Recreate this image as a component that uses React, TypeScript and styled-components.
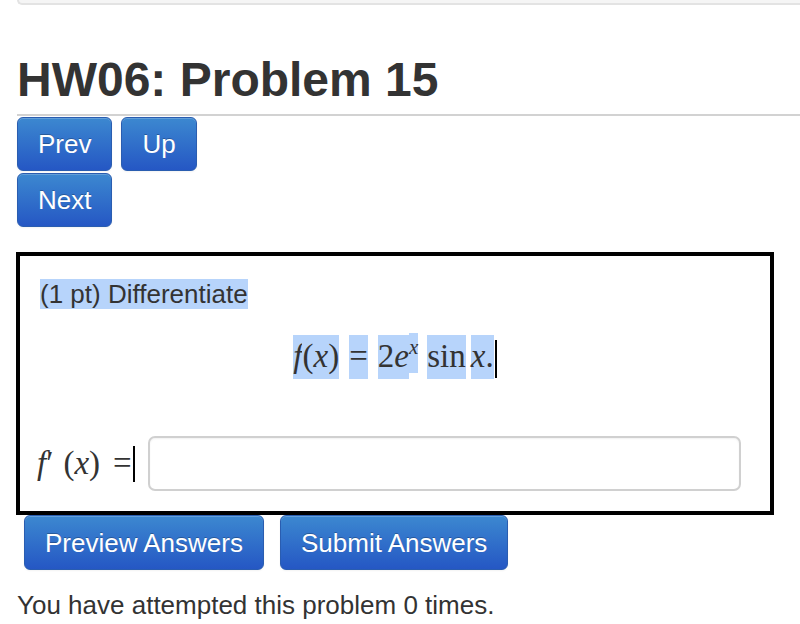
import React from 'react'
import styled, { createGlobalStyle } from 'styled-components'

const GlobalStyle = createGlobalStyle`
  body {
    margin: 0;
    background: #fff;
    color: #333;
    font-family: "Liberation Sans", Arial, sans-serif;
  }
`

const Page = styled.div`
  padding-left: 17px;
  overflow: hidden;
`
const TopWell = styled.div`
  height: 3px;
  background: #f5f5f5;
  border-bottom: 2px solid #e3e3e3;
  border-left: 2px solid #e3e3e3;
  border-bottom-left-radius: 6px;
`
const Title = styled.h1`
  margin: 49px 0 0;
  font-size: 48px;
  line-height: 52px;
  font-weight: bold;
  color: #333;
`
const Rule = styled.hr`
  margin: 8px 0 1px;
  border: 0;
  border-top: 2px solid #d2d2d2;
`
const NavRow = styled.div`
  display: flex;
  gap: 9px;
  margin-bottom: 2px;
`
const Button = styled.button`
  font-family: "Liberation Sans", Arial, sans-serif;
  font-size: 26px;
  line-height: 30px;
  height: 54px;
  padding: 0 20px;
  color: #fff;
  text-shadow: 0 -1px 0 rgba(0, 0, 0, 0.25);
  background: linear-gradient(180deg, #3c88d0 0%, #2557c4 100%);
  border: 1px solid #2a5db0;
  border-radius: 6px;
  box-shadow: inset 0 1px 0 rgba(255, 255, 255, 0.2), 0 1px 2px rgba(0, 0, 0, 0.05);
  cursor: pointer;
`
const ProblemBox = styled.div`
  margin: 25px 0 0 -1px;
  width: 750px;
  border: 4px solid #000;
  background: #fff;
  padding: 21px 0 20px;
`
const Intro = styled.div`
  padding-left: 20px;
  font-size: 26px;
  line-height: 35px;
`
const Selected = styled.span`
  background: #b7d4fb;
`
const MathLine = styled.div`
  margin-top: 24px;
  text-align: center;
  font-family: "Liberation Serif", "Times New Roman", serif;
  font-size: 33px;
  line-height: 40px;
  color: #333;
`
const Token = styled.span<{ $space?: number }>`
  background: #b7d4fb;
  margin-right: ${(p) => p.$space ?? 0}px;
  padding: 3px 0 5px;
`
const Sup = styled.sup`
  font-size: 21px;
  line-height: 0;
  vertical-align: 13px;
  background: #b7d4fb;
  padding: 2px 0 14px;
  margin-right: 9px;
`
const Caret = styled.span<{ $h: number }>`
  display: inline-block;
  width: 0;
  height: ${(p) => p.$h}px;
  border-left: 2px solid #000;
  vertical-align: middle;
  margin-left: 1px;
`
const AnswerRow = styled.div`
  display: flex;
  align-items: center;
  margin-top: 58px;
  padding-left: 17px;
`
const AnswerLabel = styled.span`
  font-family: "Liberation Serif", "Times New Roman", serif;
  font-size: 33px;
  color: #333;
  white-space: nowrap;
`
const Prime = styled.span`
  margin-right: 10px;
`
const Equals = styled.span`
  margin-left: 13px;
`
const AnswerInput = styled.input`
  margin-left: 13px;
  width: 593px;
  height: 55px;
  box-sizing: border-box;
  border: 2px solid #d0d0d0;
  border-radius: 7px;
  background: #fff;
  box-shadow: inset 0 1px 2px rgba(0, 0, 0, 0.06);
`
const SubmitRow = styled.div`
  display: flex;
  gap: 16px;
  margin-left: 7px;
`
const BigButton = styled(Button)`
  height: 55px;
`
const Attempts = styled.p`
  margin: 20px 0 0;
  font-size: 26px;
  line-height: 30px;
  color: #333;
`

const App = () => {
  return (
    <Page>
      <GlobalStyle />
      <TopWell />
      <Title>HW06: Problem 15</Title>
      <Rule />
      <NavRow>
        <Button>Prev</Button>
        <Button>Up</Button>
      </NavRow>
      <NavRow>
        <Button>Next</Button>
      </NavRow>
      <ProblemBox>
        <Intro>
          <Selected>(1 pt) Differentiate</Selected>
        </Intro>
        <MathLine>
          <Token><i>f</i></Token>
          <Token $space={10}>(<i>x</i>)</Token>
          <Token $space={10}>=</Token>
          <Token>2<i>e</i></Token>
          <Sup><i>x</i></Sup>
          <Token $space={5}>sin</Token>
          <Token>
            <i>x</i>.
          </Token>
          <Caret $h={38} />
        </MathLine>
        <AnswerRow>
          <AnswerLabel>
            <i>f</i>
            <Prime>&#8242;</Prime>(<i>x</i>)<Equals>=</Equals>
          </AnswerLabel>
          <Caret $h={36} />
          <AnswerInput type="text" />
        </AnswerRow>
      </ProblemBox>
      <SubmitRow>
        <BigButton>Preview Answers</BigButton>
        <BigButton>Submit Answers</BigButton>
      </SubmitRow>
      <Attempts>You have attempted this problem 0 times.</Attempts>
    </Page>
  )
}

export default App
